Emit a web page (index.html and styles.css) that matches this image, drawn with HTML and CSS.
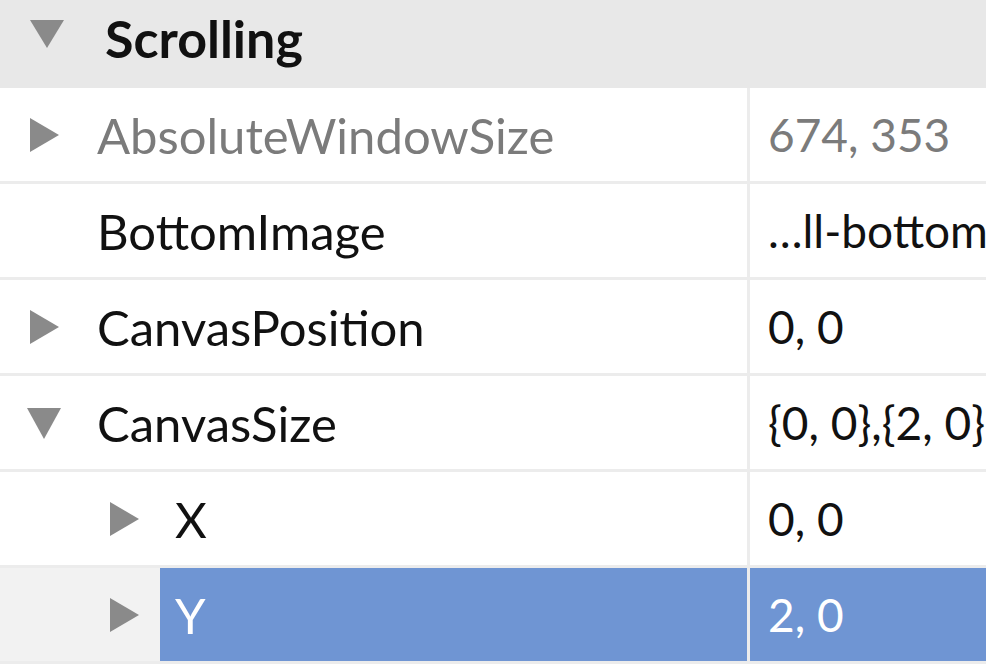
FILE: index.html
```html
<!DOCTYPE html>
<html>
<head>
  <meta name="viewport" content="width=device-width, initial-scale=1.0">
  <link rel="stylesheet" href="styles.css">
</head>
<body>
  <div class="panel">
    <div class="category">
      <span class="caret down head-caret"></span>
      <span class="category-title">Scrolling</span>
    </div>

    <div class="prop readonly">
      <div class="name">
        <span class="caret right"></span>
        <span class="label">AbsoluteWindowSize</span>
      </div>
      <div class="value">674, 353</div>
    </div>

    <div class="prop">
      <div class="name">
        <span class="caret none"></span>
        <span class="label">BottomImage</span>
      </div>
      <div class="value">…ll-bottom.png</div>
    </div>

    <div class="prop">
      <div class="name">
        <span class="caret right"></span>
        <span class="label">CanvasPosition</span>
      </div>
      <div class="value">0, 0</div>
    </div>

    <div class="prop">
      <div class="name">
        <span class="caret down"></span>
        <span class="label">CanvasSize</span>
      </div>
      <div class="value">{0, 0},{2, 0}</div>
    </div>

    <div class="prop child">
      <div class="name">
        <span class="caret right"></span>
        <span class="label">X</span>
      </div>
      <div class="value">0, 0</div>
    </div>

    <div class="prop child selected">
      <div class="name">
        <span class="caret right"></span>
        <span class="label">Y</span>
      </div>
      <div class="value">2, 0</div>
    </div>
  </div>
</body>
</html>
```

FILE: styles.css
```css
body {
  margin: 0;
  padding: 0;
  background: #fff;
  font-family: "Lato", "Open Sans", sans-serif;
  overflow: hidden;
}

.panel {
  width: 986px;
}

.category {
  height: 88px;
  background: #e8e8e8;
  display: flex;
  align-items: center;
}

.category-title {
  font-weight: bold;
  font-size: 52px;
  color: #111;
  margin-left: 42px;
  margin-top: -12px;
}

.prop {
  display: flex;
  height: 93px;
  border-bottom: 3px solid #ececec;
  font-size: 49px;
  color: #111;
}

.name {
  width: 750px;
  box-sizing: border-box;
  border-right: 3px solid #ececec;
  display: flex;
  align-items: stretch;
  flex-shrink: 0;
}

.label {
  flex: 1;
  display: flex;
  align-items: center;
  padding-left: 17px;
}

.value {
  flex: 1;
  display: flex;
  align-items: center;
  padding-left: 18px;
  font-size: 46px;
  white-space: nowrap;
  overflow: hidden;
}

.caret {
  width: 80px;
  flex-shrink: 0;
  position: relative;
}

.caret::after {
  content: '';
  position: absolute;
  left: 30px;
  top: 50%;
  width: 0;
  height: 0;
}

.caret.right::after {
  margin-top: -17px;
  border-left: 29px solid #8a8a8a;
  border-top: 17px solid transparent;
  border-bottom: 17px solid transparent;
}

.caret.down::after {
  left: 27px;
  margin-top: -15px;
  border-top: 31px solid #8a8a8a;
  border-left: 17px solid transparent;
  border-right: 17px solid transparent;
}

.category .head-caret {
  width: 63px;
  align-self: stretch;
}

.category .head-caret::after {
  left: 30px;
  top: 20px;
  margin-top: 0;
  border-top-width: 28px;
}

.readonly {
  color: #7b7b7b;
}

.child .caret {
  width: 160px;
}

.child .caret::after {
  left: 110px;
}

.child .label {
  padding-left: 15px;
}

.selected .caret {
  background: #f2f2f2;
}

.selected .label,
.selected .value {
  background: #6f95d3;
  color: #fff;
}
```
